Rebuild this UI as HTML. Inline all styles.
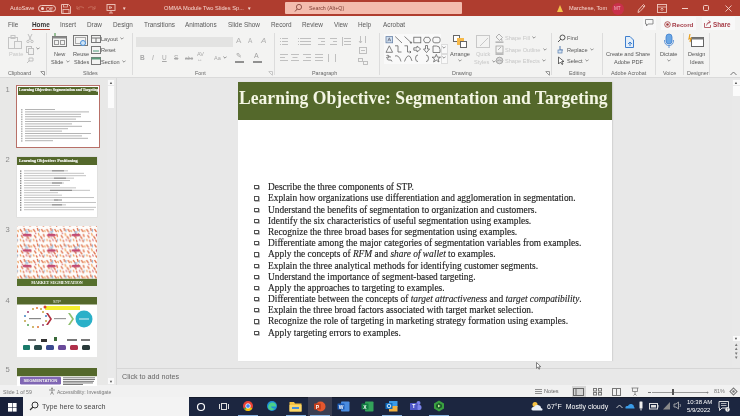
<!DOCTYPE html>
<html><head><meta charset="utf-8">
<style>
*{margin:0;padding:0;box-sizing:border-box}
html,body{width:740px;height:416px;overflow:hidden;background:#e8e8e8;font-family:"Liberation Sans",sans-serif;position:relative;color:#444}
.a{position:absolute;white-space:nowrap}
#title{left:0;top:0;width:740px;height:16px;background:#af3d2f}
#tabs{left:0;top:16px;width:740px;height:15px;background:#f3f3f2}
#ribbon{left:0;top:31px;width:740px;height:46px;background:#f3f3f2}
#rbline{left:0;top:77px;width:740px;height:1px;background:#dadada}
#thumbs{left:0;top:78px;width:117px;height:307px;background:#e8e8e7}
#main{left:117px;top:78px;width:623px;height:290px;background:#e8e8e8}
#slide{left:237.5px;top:82px;width:374px;height:279px;background:#fff;box-shadow:1px 0 1px #d4d4d4}
#stitle{left:237.5px;top:82px;width:374px;height:37.5px;background:#54682b}
#notes{left:117px;top:368px;width:623px;height:17px;background:#e8e8e8;border-top:1px solid #d6d6d6}
#status{left:0;top:385px;width:740px;height:12px;background:#f1f1f1}
#task{left:0;top:397px;width:740px;height:19px;background:#1c2640;border-top:1px solid #151b2b}
.tt{color:#f6d9d2;font-size:6px;top:4px}
.tab{top:20.5px;font-size:6.4px;color:#5a5a5a}
.rl{font-size:5.6px;color:#555}
.gl{font-size:5.4px;color:#666;top:70px}
.dd{display:inline-block;width:2px;height:2px;border-right:0.7px solid #888;border-bottom:0.7px solid #888;transform:rotate(45deg);margin-left:3px;vertical-align:2.5px}
.sep{width:1px;background:#dcdcdc;top:33px;height:42px}
.dis{color:#c6c6c6}
.blt{font-family:"Liberation Serif",serif;font-size:9.38px;color:#1a1a1a;left:268px;-webkit-text-stroke:0.15px #333}
.bx{left:254.3px;width:4.6px;height:4.3px;border:0.7px solid #555;box-shadow:0.7px 0.7px 0 #999}
</style></head><body><div style="position:absolute;left:0;top:0;width:740px;height:416px;will-change:transform">
<div id="title" class="a"></div>
<div id="tabs" class="a"></div>
<div id="ribbon" class="a"></div>
<div id="rbline" class="a"></div>
<div id="thumbs" class="a"></div>
<div id="main" class="a"></div>
<div id="slide" class="a"></div>
<div id="stitle" class="a"></div>
<div id="notes" class="a"></div>
<div id="status" class="a"></div>
<div id="task" class="a"></div>

<!-- TITLEBAR -->
<div class="a tt" style="left:10px;top:5px;font-size:5.6px">AutoSave</div>
<div class="a" style="left:38px;top:5px;width:18px;height:7px;border:0.9px solid #f3cfc6;border-radius:4px"></div>
<div class="a" style="left:40.5px;top:7px;width:3px;height:3px;background:#f6ddd6;border-radius:50%"></div>
<div class="a tt" style="left:46px;font-size:5px;top:5.5px">Off</div>
<svg class="a" style="left:60px;top:4px" width="11" height="10"><path d="M1.5 0.5 H8.5 L10.5 2.5 V9.5 H1.5 Z" fill="none" stroke="#f0c9bf" stroke-width="0.9"/><rect x="3" y="5.5" width="6" height="4" fill="none" stroke="#f0c9bf" stroke-width="0.8"/><rect x="3.5" y="0.5" width="4" height="2.5" fill="none" stroke="#f0c9bf" stroke-width="0.7"/></svg>
<svg class="a" style="left:75px;top:4px" width="24" height="10"><path d="M2 5 Q5 1 9 4 M2 5 L2 2 M2 5 L5 5" stroke="#c8705f" fill="none" stroke-width="0.9"/><path d="M20 5 Q17 1 13 4 M20 5 L20 2 M20 5 L17 5" stroke="#c8705f" fill="none" stroke-width="0.9"/></svg>
<svg class="a" style="left:106px;top:3px" width="10" height="11"><rect x="1" y="1.5" width="8" height="6" fill="none" stroke="#f0c9bf" stroke-width="0.9"/><path d="M5 7.5 V10 M3 10 H7 M3.5 3.5 L6 4.5 L3.5 5.5Z" stroke="#f0c9bf" fill="none" stroke-width="0.8"/></svg>
<div class="a tt" style="left:122px;font-size:4.5px;top:6px">&#9660;</div>
<div class="a tt" style="left:164px;font-size:5.7px;top:5px">OMMA Module Two Slides Sp...</div>
<div class="a tt" style="left:247px;font-size:4.5px;top:6px">&#9660;</div>
<div class="a" style="left:285px;top:2px;width:177px;height:12px;background:#f3bcae;border-radius:1px"></div>
<svg class="a" style="left:294px;top:3px" width="9" height="10"><circle cx="5" cy="4" r="2.6" fill="none" stroke="#8a4a40" stroke-width="0.9"/><path d="M3.2 6 L1 8.5" stroke="#8a4a40" stroke-width="1"/></svg>
<div class="a tt" style="left:309px;color:#7a3a30;font-size:5.3px;top:5px">Search (Alt+Q)</div>
<div class="a" style="left:557px;top:5px;width:0;height:0;border-left:3.5px solid transparent;border-right:3.5px solid transparent;border-bottom:7px solid #f2c24a"></div>
<div class="a tt" style="left:569px;font-size:5.6px;top:5.3px">Marchese, Tom</div>
<div class="a" style="left:611.5px;top:2.8px;width:12px;height:12px;border-radius:50%;background:#c9304a"></div>
<div class="a tt" style="left:614px;font-size:4.6px;top:6.3px;color:#f3b8c2">MT</div>
<svg class="a" style="left:636px;top:3px" width="10" height="11"><path d="M2 9.5 L2.5 7 L7.5 1.5 L9 3 L4 8.5 Z M6.5 2.5 L8 4" stroke="#f0c9bf" fill="none" stroke-width="0.9"/></svg>
<svg class="a" style="left:657px;top:4px" width="10" height="9"><rect x="0.5" y="0.5" width="9" height="8" fill="none" stroke="#f0c9bf" stroke-width="0.9"/><path d="M0.5 3 H9.5 M5 4.5 V7 M3.5 5.5 L5 4 L6.5 5.5" stroke="#f0c9bf" fill="none" stroke-width="0.8"/></svg>
<div class="a" style="left:682px;top:8px;width:6px;height:0.9px;background:#f3d0c8"></div>
<div class="a" style="left:703px;top:5px;width:6px;height:6px;border:0.9px solid #f3d0c8;border-radius:1.5px"></div>
<svg class="a" style="left:725px;top:5px" width="7" height="7"><path d="M0.5 0.5 L6.5 6.5 M6.5 0.5 L0.5 6.5" stroke="#f3d0c8" stroke-width="0.9"/></svg>

<!-- TABS -->
<div class="a tab" style="left:8px">File</div>
<div class="a tab" style="left:32px;font-weight:bold;color:#333">Home</div>
<div class="a" style="left:32px;top:28.5px;width:18px;height:1.5px;background:#b33d2e"></div>
<div class="a tab" style="left:60px">Insert</div>
<div class="a tab" style="left:87px">Draw</div>
<div class="a tab" style="left:113px">Design</div>
<div class="a tab" style="left:144px">Transitions</div>
<div class="a tab" style="left:185px">Animations</div>
<div class="a tab" style="left:228px">Slide Show</div>
<div class="a tab" style="left:271px">Record</div>
<div class="a tab" style="left:302px">Review</div>
<div class="a tab" style="left:334px">View</div>
<div class="a tab" style="left:358px">Help</div>
<div class="a tab" style="left:383px">Acrobat</div>
<div class="a" style="left:643px;top:17px;width:13px;height:13px;background:#f8f8f8"></div>
<svg class="a" style="left:645px;top:19px" width="9" height="8"><path d="M0.5 0.5 H8 V5 H3 L1.5 7 V5 H0.5 Z" fill="none" stroke="#777" stroke-width="0.8"/></svg>
<div class="a" style="left:661px;top:17px;width:35px;height:13px;background:#f8f8f8"></div>
<svg class="a" style="left:663.5px;top:20.5px" width="7" height="7"><circle cx="3.5" cy="3.5" r="2.8" fill="none" stroke="#a4373a" stroke-width="0.8"/><circle cx="3.5" cy="3.5" r="1.3" fill="#a4373a"/></svg>
<div class="a tab" style="left:672px;color:#a33a45;font-weight:bold;font-size:6.2px;-webkit-text-stroke:0">Record</div>
<div class="a" style="left:702px;top:17px;width:33px;height:13px;background:#f8f8f8"></div>
<svg class="a" style="left:704px;top:20px" width="7" height="8"><path d="M0.5 3 V7.5 H6.5 V5 M2.5 5.5 Q3 2 6 2 M4.5 0.5 L6.5 2 L4.5 3.5" stroke="#a83f4a" fill="none" stroke-width="0.8"/></svg>
<div class="a tab" style="left:713px;color:#a83f4a;font-weight:bold;font-size:6.3px">Share</div>

<!-- RIBBON -->
<!-- Clipboard -->
<svg class="a" style="left:7px;top:34px" width="16" height="16" viewBox="0 0 16 16"><rect x="1.5" y="3.5" width="9" height="11" fill="none" stroke="#c4c4c4"/><rect x="4" y="1.5" width="4" height="3" fill="none" stroke="#c4c4c4"/><rect x="7.5" y="7.5" width="7" height="7" fill="#f1f1f0" stroke="#c4c4c4"/></svg>
<div class="a rl dis" style="left:9px;top:51px">Paste</div>

<svg class="a" style="left:25px;top:33px" width="10" height="10"><path d="M3 1 L6 7 M7 1 L4 7" stroke="#c0c0c0" fill="none"/><circle cx="3" cy="8.5" r="1.2" fill="none" stroke="#c0c0c0"/><circle cx="7" cy="8.5" r="1.2" fill="none" stroke="#c0c0c0"/></svg>
<svg class="a" style="left:25px;top:45px" width="10" height="10"><rect x="1.5" y="1.5" width="5" height="6" fill="none" stroke="#c0c0c0"/><rect x="3.5" y="3.5" width="5" height="6" fill="#f1f1f0" stroke="#c0c0c0"/></svg>
<div class="a rl dis" style="left:36px;top:46px"><svg width="4" height="3" style="vertical-align:1px"><path d="M0.4 0.6 L2 2.2 L3.6 0.6" stroke="#777" stroke-width="0.8" fill="none"/></svg></div>
<svg class="a" style="left:25px;top:56px" width="10" height="9"><path d="M2 7 L5 4 M4 2 L8 2 L8 5 L4 5 Z" stroke="#c0c0c0" fill="none"/></svg>
<div class="a gl" style="left:8px">Clipboard</div>
<svg class="a" style="left:40px;top:71px" width="5" height="5"><path d="M0.5 0.5 H4.5 V4.5 M1 1 L4 4" stroke="#999" fill="none"/></svg>
<div class="a sep" style="left:46px"></div>
<!-- Slides -->
<svg class="a" style="left:51px;top:33px" width="17" height="15"><rect x="1.5" y="3.5" width="14" height="10" fill="none" stroke="#777"/><rect x="1.5" y="3.5" width="14" height="2" fill="#888"/><rect x="3.5" y="7.5" width="4" height="4" fill="none" stroke="#999"/><rect x="9.5" y="7.5" width="4" height="4" fill="none" stroke="#999"/><path d="M4 0 V3" stroke="#3b8b3b"/></svg>
<div class="a rl" style="left:54px;top:51px">New</div>
<div class="a rl" style="left:51px;top:59px">Slide<svg width="4" height="3" style="margin-left:2.5px;vertical-align:1px"><path d="M0.4 0.6 L2 2.2 L3.6 0.6" stroke="#777" stroke-width="0.8" fill="none"/></svg></div>
<svg class="a" style="left:72px;top:34px" width="17" height="15"><rect x="1.5" y="1.5" width="14" height="10" fill="none" stroke="#777"/><rect x="3.5" y="3.5" width="10" height="6" fill="none" stroke="#aaa"/><circle cx="11" cy="9" r="2.5" fill="#cfe4f5" stroke="#4a90d9"/></svg>
<div class="a rl" style="left:73px;top:51px">Reuse</div>
<div class="a rl" style="left:74px;top:59px">Slides</div>
<svg class="a" style="left:91px;top:35px" width="10" height="8"><rect x="0.5" y="0.5" width="9" height="7" fill="none" stroke="#777"/><path d="M0.5 3 H9.5 M5 3 V7.5" stroke="#777"/></svg>
<div class="a rl" style="left:101px;top:36px">Layout<svg width="4" height="3" style="margin-left:2.5px;vertical-align:1px"><path d="M0.4 0.6 L2 2.2 L3.6 0.6" stroke="#777" stroke-width="0.8" fill="none"/></svg></div>
<svg class="a" style="left:91px;top:46px" width="10" height="8"><rect x="0.5" y="0.5" width="9" height="7" fill="none" stroke="#777"/><path d="M2 5 H8" stroke="#4a9a7a"/></svg>
<div class="a rl" style="left:101px;top:47px">Reset</div>
<svg class="a" style="left:91px;top:57px" width="10" height="8"><rect x="0.5" y="0.5" width="9" height="7" fill="none" stroke="#777"/><rect x="0.5" y="0.5" width="9" height="2" fill="#5a9a7a"/></svg>
<div class="a rl" style="left:101px;top:58.5px">Section<svg width="4" height="3" style="margin-left:2.5px;vertical-align:1px"><path d="M0.4 0.6 L2 2.2 L3.6 0.6" stroke="#777" stroke-width="0.8" fill="none"/></svg></div>
<div class="a gl" style="left:83px">Slides</div>
<div class="a sep" style="left:132px"></div>
<!-- Font -->
<div class="a" style="left:136px;top:37px;width:97px;height:10px;background:#e3e3e2"></div>
<div class="a" style="left:236px;top:36px;font-size:8px;color:#b0b0b0">A</div>
<div class="a" style="left:248px;top:37px;font-size:6.5px;color:#b0b0b0">A</div>
<div class="a" style="left:261px;top:36px;font-size:8px;color:#b0b0b0;font-style:italic">A</div>
<div class="a" style="left:140px;top:54px;font-size:6.5px;color:#a8a8a8;font-weight:bold">B</div>
<div class="a" style="left:152px;top:54px;font-size:6.5px;color:#a8a8a8;font-style:italic">I</div>
<div class="a" style="left:162px;top:54px;font-size:6.5px;color:#a8a8a8;text-decoration:underline">U</div>
<div class="a" style="left:174px;top:54px;font-size:6.5px;color:#a8a8a8;text-decoration:line-through">S</div>
<div class="a" style="left:185px;top:55px;font-size:5px;color:#a8a8a8;text-decoration:line-through">abc</div>
<div class="a" style="left:197px;top:52px;font-size:5.5px;color:#a8a8a8;line-height:5px">AV<br>&#8596;</div>
<div class="a" style="left:214px;top:55px;font-size:5.5px;color:#a8a8a8">Aa<svg width="4" height="3" style="margin-left:2.5px;vertical-align:1px"><path d="M0.4 0.6 L2 2.2 L3.6 0.6" stroke="#777" stroke-width="0.8" fill="none"/></svg></div>
<div class="a" style="left:236px;top:52px;font-size:7px;color:#a0a0a0">&#9998;</div>
<div class="a" style="left:235px;top:61px;width:9px;height:2px;background:#909090"></div>
<div class="a" style="left:254px;top:52px;font-size:7px;color:#a0a0a0">A</div>
<div class="a" style="left:253px;top:61px;width:9px;height:2px;background:#909090"></div>
<div class="a gl" style="left:195px">Font</div>
<svg class="a" style="left:268px;top:71px" width="5" height="5"><path d="M0.5 0.5 H4.5 V4.5 M1 1 L4 4" stroke="#c8c8c8" fill="none"/></svg>
<div class="a sep" style="left:274px"></div>
<!-- Paragraph -->
<svg class="a" style="left:278px;top:36px" width="76" height="28" stroke="#bababa" fill="none" stroke-width="0.9">
<path d="M2 2.5H3 M4 2.5H10 M2 5.5H3 M4 5.5H10 M2 8.5H3 M4 8.5H10"/>
<path d="M20 2.5H21 M22 2.5H33 M20 5.5H21 M22 5.5H33 M20 8.5H21 M22 8.5H33"/>
<path d="M40 2.5H47 M43 5.5H47 M40 8.5H47 M52 2.5H59 M55 5.5H59 M52 8.5H59"/>
<path d="M66 2.5H73 M66 5.5H73 M66 8.5H73 M64.5 1V10"/>
<path d="M2 18.5H10 M2 21.5H7 M2 24.5H10"/>
<path d="M13 18.5H21 M14.5 21.5H19.5 M13 24.5H21"/>
<path d="M25 18.5H33 M28 21.5H33 M25 24.5H33"/>
<path d="M37 18.5H45 M37 21.5H45 M37 24.5H45"/>
<path d="M50.5 18V26 M57.5 18V26"/>
</svg>
<svg class="a" style="left:357px;top:35px" width="12" height="32" stroke="#bababa" fill="none" stroke-width="0.9">
<path d="M3.5 1V8 M8.5 1V8 M2 6 L3.5 8 L5 6"/>
<rect x="2.5" y="12.5" width="7" height="6"/><path d="M4 15.5 H8"/>
<rect x="1.5" y="23.5" width="4" height="3"/><rect x="6.5" y="26.5" width="4" height="3"/>
</svg>
<div class="a gl" style="left:312px">Paragraph</div>
<div class="a sep" style="left:379px"></div>
<!-- Drawing -->
<div class="a" style="left:384px;top:34px;width:57px;height:30px;background:#f9f9f9"></div>
<svg class="a" style="left:384px;top:34px" width="58" height="30" stroke="#666" fill="none" stroke-width="0.8">
<rect x="2" y="2.6" width="6.6" height="6.2" fill="#cfdff0" stroke="#6a84a8"/><path d="M3.8 7.3 L5.3 3.8 L6.8 7.3 M4.3 6 H6.3" stroke="#556" stroke-width="0.6"/>
<path d="M11.2 2.5 L18 9"/>
<path d="M20.5 2.5 L27 8.5"/><circle cx="27" cy="8.6" r="0.7" fill="#666"/>
<rect x="29.8" y="3.2" width="7" height="5.6"/>
<path d="M39.5 6 L41 3.3 H45 L46.6 6 L45 8.7 H41 Z"/>
<rect x="48.8" y="3.2" width="7.3" height="5.6" rx="2"/>
<path d="M2 18.3 L5.3 11.8 L8.6 18.3 Z"/>
<path d="M11 11.8 H14 V18 H17.5"/>
<path d="M20.5 11.8 H23.5 V18 H27 M25.8 16.8 L27 18 L25.8 19.2"/>
<path d="M29.8 13.8 H33 V12 L36.6 15 L33 18 V16.2 H29.8 Z"/>
<path d="M41.5 11.5 V15 H39.5 L42.5 18.6 L45.5 15 H43.5 V11.5 Z"/>
<path d="M49 12 H52.5 Q56 12 56 15.5 V18.5 H49 Z"/>
<path d="M2.5 21.5 Q6 20.5 4.5 23.5 Q2 26 5 26 Q8 25.5 8 27.5 M2 24 Q4 22 7 23"/>
<path d="M11 22 Q15 20.5 17 27.5"/>
<path d="M20.5 27.5 Q23 20 26 22.5 Q27 24 28 27"/>
<path d="M34 21 Q31.5 21 31.5 24.3 Q31.5 27.6 34 27.6"/>
<path d="M42 21 Q44.5 21 44.5 24.3 Q44.5 27.6 42 27.6"/>
<path d="M52.3 20.3 L53.5 23.2 L56.5 23.2 L54.1 25 L55 28 L52.3 26.2 L49.6 28 L50.5 25 L48.1 23.2 L51.1 23.2 Z"/>
</svg>
<div class="a" style="left:440.5px;top:43.5px;width:7px;height:10px;background:#f9f9f9;border:0.8px solid #ddd"></div>
<div class="a" style="left:440.5px;top:54px;width:7px;height:9.5px;background:#f9f9f9;border:0.8px solid #ddd"></div>
<div class="a" style="left:442px;top:45px;font-size:5px;color:#555"><svg width="4" height="3" style="vertical-align:1px"><path d="M0.4 0.6 L2 2.2 L3.6 0.6" stroke="#777" stroke-width="0.8" fill="none"/></svg></div>
<div class="a" style="left:442px;top:55px;font-size:5px;color:#555"><svg width="4" height="3" style="vertical-align:1px"><path d="M0.4 0.6 L2 2.2 L3.6 0.6" stroke="#777" stroke-width="0.8" fill="none"/></svg></div>
<svg class="a" style="left:452px;top:34px" width="16" height="15"><rect x="1.5" y="1.5" width="6" height="6" fill="#fff" stroke="#666"/><rect x="5" y="4" width="7" height="7" fill="#f6b94a"/><rect x="8.5" y="7.5" width="6" height="6" fill="#fff" stroke="#666"/></svg>
<div class="a rl" style="left:450px;top:51px">Arrange</div>
<div class="a rl" style="left:458px;top:58px"><svg width="4" height="3" style="vertical-align:1px"><path d="M0.4 0.6 L2 2.2 L3.6 0.6" stroke="#777" stroke-width="0.8" fill="none"/></svg></div>
<svg class="a" style="left:475px;top:34px" width="16" height="15"><rect x="1.5" y="1.5" width="13" height="12" fill="none" stroke="#c8c8c8"/><path d="M5 12 L13 4" stroke="#c8c8c8"/></svg>
<div class="a rl dis" style="left:476px;top:51px">Quick</div>
<div class="a rl dis" style="left:474px;top:59px">Styles<svg width="4" height="3" style="margin-left:2.5px;vertical-align:1px"><path d="M0.4 0.6 L2 2.2 L3.6 0.6" stroke="#777" stroke-width="0.8" fill="none"/></svg></div>
<svg class="a" style="left:495px;top:33px" width="9" height="10"><path d="M4 1 L7.5 4.5 L4.5 7.5 L1 4 Z M6.5 6 Q7.5 7.5 6.5 8" stroke="#a0a0a0" fill="none" stroke-width="0.8"/><rect x="0.5" y="8.5" width="8" height="1.3" fill="#a8a8a8"/></svg>
<div class="a rl dis" style="left:505px;top:35px">Shape Fill<svg width="4" height="3" style="margin-left:2.5px;vertical-align:1px"><path d="M0.4 0.6 L2 2.2 L3.6 0.6" stroke="#777" stroke-width="0.8" fill="none"/></svg></div>
<svg class="a" style="left:495px;top:44.5px" width="9" height="10"><rect x="1" y="1" width="7" height="7" fill="none" stroke="#a0a0a0" stroke-width="0.8"/><path d="M3 5 L6 2" stroke="#a0a0a0" stroke-width="0.8"/><rect x="0.5" y="8.5" width="8" height="1.3" fill="#a8a8a8"/></svg>
<div class="a rl dis" style="left:505px;top:47px">Shape Outline<svg width="4" height="3" style="margin-left:2.5px;vertical-align:1px"><path d="M0.4 0.6 L2 2.2 L3.6 0.6" stroke="#777" stroke-width="0.8" fill="none"/></svg></div>
<svg class="a" style="left:495px;top:56px" width="9" height="9"><circle cx="4.5" cy="4.5" r="3.3" fill="#d8d8d8" stroke="#999" stroke-width="0.8"/><path d="M2 5 Q4.5 3 7 5" stroke="#999" fill="none" stroke-width="0.7"/></svg>
<div class="a rl dis" style="left:505px;top:58px">Shape Effects<svg width="4" height="3" style="margin-left:2.5px;vertical-align:1px"><path d="M0.4 0.6 L2 2.2 L3.6 0.6" stroke="#777" stroke-width="0.8" fill="none"/></svg></div>
<div class="a gl" style="left:452px">Drawing</div>
<svg class="a" style="left:545px;top:71px" width="5" height="5"><path d="M0.5 0.5 H4.5 V4.5 M1 1 L4 4" stroke="#999" fill="none"/></svg>
<div class="a sep" style="left:551px"></div>
<!-- Editing -->
<svg class="a" style="left:557px;top:34px" width="9" height="9"><circle cx="5.5" cy="3.5" r="2.5" fill="none" stroke="#555"/><path d="M4 5 L1 8" stroke="#555"/></svg>
<div class="a rl" style="left:567px;top:35px">Find</div>
<svg class="a" style="left:557px;top:45px" width="9" height="9"><path d="M3 1 V5 H6" stroke="#5a7fb0" fill="none"/><rect x="1" y="5" width="4" height="3" fill="#d6e5f5" stroke="#5a7fb0" stroke-width="0.7"/></svg>
<div class="a rl" style="left:567px;top:47px">Replace<svg width="4" height="3" style="margin-left:2.5px;vertical-align:1px"><path d="M0.4 0.6 L2 2.2 L3.6 0.6" stroke="#777" stroke-width="0.8" fill="none"/></svg></div>
<svg class="a" style="left:557px;top:56px" width="9" height="9"><path d="M1.5 1 L1.5 8 L3.5 6 L5 8.5 L6 8 L4.7 5.5 L7 5.5 Z" fill="#fff" stroke="#444" stroke-width="0.8"/></svg>
<div class="a rl" style="left:567px;top:58px">Select<svg width="4" height="3" style="margin-left:2.5px;vertical-align:1px"><path d="M0.4 0.6 L2 2.2 L3.6 0.6" stroke="#777" stroke-width="0.8" fill="none"/></svg></div>
<div class="a gl" style="left:569px">Editing</div>
<div class="a sep" style="left:602px"></div>
<!-- Acrobat -->
<svg class="a" style="left:624px;top:36px" width="11" height="12"><path d="M1.5 0.5 H6 L9.5 4 V11.5 H1.5 Z" fill="#e3eef9" stroke="#3f7fce"/><path d="M4 8 L6 6 L8 8 M6 6 V10" stroke="#3f7fce" fill="none"/></svg>
<div class="a rl" style="left:606px;top:51px">Create and Share</div>
<div class="a rl" style="left:614px;top:59px">Adobe PDF</div>
<div class="a gl" style="left:611px">Adobe Acrobat</div>
<div class="a sep" style="left:655px"></div>
<!-- Voice -->
<svg class="a" style="left:663px;top:33px" width="12" height="16"><rect x="3" y="1" width="6" height="10" rx="3" fill="#6aa6e4" stroke="#3f7fce" stroke-width="0.8"/><path d="M1.5 7 Q1.5 12.5 6 12.5 Q10.5 12.5 10.5 7 M6 12.5 V15" stroke="#3f7fce" fill="none" stroke-width="0.8"/></svg>
<div class="a rl" style="left:660px;top:51px">Dictate</div>
<div class="a rl" style="left:667px;top:58px"><svg width="4" height="3" style="vertical-align:1px"><path d="M0.4 0.6 L2 2.2 L3.6 0.6" stroke="#777" stroke-width="0.8" fill="none"/></svg></div>
<div class="a gl" style="left:663px">Voice</div>
<div class="a sep" style="left:683px"></div>
<!-- Designer -->
<svg class="a" style="left:688px;top:33px" width="17" height="15"><rect x="3.5" y="4.5" width="12" height="9" fill="#fff" stroke="#666"/><rect x="3.5" y="4.5" width="12" height="2" fill="#777"/><path d="M2 1 L1 6 L3 5 L2 9" stroke="#e8a020" fill="none" stroke-width="1.2"/></svg>
<div class="a rl" style="left:688px;top:51px">Design</div>
<div class="a rl" style="left:690px;top:59px">Ideas</div>
<div class="a gl" style="left:687px">Designer</div>
<div class="a sep" style="left:709px"></div>
<svg class="a" style="left:730px;top:71px" width="7" height="5"><path d="M0.5 4 L3.5 1 L6.5 4" stroke="#666" fill="none" stroke-width="0.9"/></svg>

<!-- SLIDE -->
<div class="a" style="left:239px;top:87.5px;font-family:'Liberation Serif',serif;font-weight:bold;font-size:17.6px;color:#f4f6e4;transform:scaleY(1.07);transform-origin:0 100%">Learning Objective: Segmentation and Targeting</div>
<div class="a bx" style="top:185.2px"></div><div class="a blt" style="top:182.2px">Describe the three components of STP.</div>
<div class="a bx" style="top:196.4px"></div><div class="a blt" style="top:193.4px">Explain how organizations use differentiation and agglomeration in segmentation.</div>
<div class="a bx" style="top:207.6px"></div><div class="a blt" style="top:204.6px">Understand the benefits of segmentation to organization and customers.</div>
<div class="a bx" style="top:218.7px"></div><div class="a blt" style="top:215.7px">Identify the six characteristics of useful segmentation using examples.</div>
<div class="a bx" style="top:229.9px"></div><div class="a blt" style="top:226.9px">Recognize the three broad bases for segmentation using examples.</div>
<div class="a bx" style="top:241.1px"></div><div class="a blt" style="top:238.1px">Differentiate among the major categories of segmentation variables from examples.</div>
<div class="a bx" style="top:252.3px"></div><div class="a blt" style="top:249.3px">Apply the concepts of <i>RFM</i> and <i>share of wallet</i> to examples.</div>
<div class="a bx" style="top:263.5px"></div><div class="a blt" style="top:260.5px">Explain the three analytical methods for identifying customer segments.</div>
<div class="a bx" style="top:274.6px"></div><div class="a blt" style="top:271.6px">Understand the importance of segment-based targeting.</div>
<div class="a bx" style="top:285.8px"></div><div class="a blt" style="top:282.8px">Apply the approaches to targeting to examples.</div>
<div class="a bx" style="top:297.0px"></div><div class="a blt" style="top:294.0px">Differentiate between the concepts of <i>target attractiveness</i> and <i>target compatibility</i>.</div>
<div class="a bx" style="top:308.2px"></div><div class="a blt" style="top:305.2px">Explain the three broad factors associated with target market selection.</div>
<div class="a bx" style="top:319.4px"></div><div class="a blt" style="top:316.4px">Recognize the role of targeting in marketing strategy formation using examples.</div>
<div class="a bx" style="top:330.5px"></div><div class="a blt" style="top:327.5px">Apply targeting errors to examples.</div>

<!-- THUMBS -->
<div class="a" style="left:5.5px;top:85.0px;font-size:7.6px;color:#8a8a8a">1</div>
<div class="a" style="left:15.5px;top:85px;width:84px;height:62.8px;border:1.6px solid #b87068;background:#fff"></div>
<div class="a" style="left:17.5px;top:87px;width:80px;height:8px;background:#54682b"></div>
<div class="a" style="left:19px;top:88.3px;font-family:'Liberation Serif',serif;font-weight:bold;font-size:3.8px;color:#fff;-webkit-text-stroke:0.1px #fff">Learning Objective: Segmentation and Targeting</div>
<svg class="a" style="left:21px;top:108.3px" width="72" height="36">
<g fill="#b4b4b4">
<rect x="0" y="1" width="1.5" height="1.5"/><rect x="4" y="1" width="30" height="1"/>
<rect x="0" y="3.4" width="1.5" height="1.5"/><rect x="4" y="3.4" width="64" height="1"/>
<rect x="0" y="5.8" width="1.5" height="1.5"/><rect x="4" y="5.8" width="56" height="1"/>
<rect x="0" y="8.2" width="1.5" height="1.5"/><rect x="4" y="8.2" width="56" height="1"/>
<rect x="0" y="10.6" width="1.5" height="1.5"/><rect x="4" y="10.6" width="51" height="1"/>
<rect x="0" y="13" width="1.5" height="1.5"/><rect x="4" y="13" width="66" height="1"/>
<rect x="0" y="15.4" width="1.5" height="1.5"/><rect x="4" y="15.4" width="47" height="1"/>
<rect x="0" y="17.8" width="1.5" height="1.5"/><rect x="4" y="17.8" width="57" height="1"/>
<rect x="0" y="20.2" width="1.5" height="1.5"/><rect x="4" y="20.2" width="43" height="1"/>
<rect x="0" y="22.6" width="1.5" height="1.5"/><rect x="4" y="22.6" width="37" height="1"/>
<rect x="0" y="25" width="1.5" height="1.5"/><rect x="4" y="25" width="66" height="1"/>
<rect x="0" y="27.4" width="1.5" height="1.5"/><rect x="4" y="27.4" width="57" height="1"/>
<rect x="0" y="29.8" width="1.5" height="1.5"/><rect x="4" y="29.8" width="63" height="1"/>
<rect x="0" y="32.2" width="1.5" height="1.5"/><rect x="4" y="32.2" width="28" height="1"/>
</g></svg>

<div class="a" style="left:5.5px;top:155.0px;font-size:7.6px;color:#8a8a8a">2</div>
<div class="a" style="left:17px;top:157px;width:80px;height:59.5px;background:#fff;box-shadow:0 0 0 0.5px #d8d8d8"></div>
<div class="a" style="left:17px;top:157px;width:80px;height:8px;background:#54682b"></div>
<div class="a" style="left:19px;top:157.8px;font-family:'Liberation Serif',serif;font-weight:bold;font-size:4.3px;color:#fff;-webkit-text-stroke:0.1px #fff">Learning Objective: Positioning</div>
<svg class="a" style="left:20px;top:169.5px" width="76" height="44">
<g fill="#bcbcbc">
<rect x="0" y="0.40" width="1.4" height="1.4" fill="#888"/><rect x="4" y="0.40" width="44" height="0.9"/><rect x="32" y="0.40" width="12" height="0.9" fill="#777"/>
<rect x="0" y="2.83" width="1.4" height="1.4" fill="#888"/><rect x="4" y="2.83" width="60" height="0.9"/>
<rect x="0" y="5.26" width="1.4" height="1.4" fill="#888"/><rect x="4" y="5.26" width="62" height="0.9"/>
<rect x="0" y="7.69" width="1.4" height="1.4" fill="#888"/><rect x="4" y="7.69" width="50" height="0.9"/><rect x="34" y="7.69" width="12" height="0.9" fill="#777"/>
<rect x="0" y="10.12" width="1.4" height="1.4" fill="#888"/><rect x="4" y="10.12" width="46" height="0.9"/>
<rect x="0" y="12.55" width="1.4" height="1.4" fill="#888"/><rect x="4" y="12.55" width="40" height="0.9"/><rect x="32" y="12.55" width="10" height="0.9" fill="#777"/>
<rect x="0" y="14.98" width="1.4" height="1.4" fill="#888"/><rect x="4" y="14.98" width="36" height="0.9"/>
<rect x="0" y="17.41" width="1.4" height="1.4" fill="#888"/><rect x="4" y="17.41" width="52" height="0.9"/>
<rect x="0" y="19.84" width="1.4" height="1.4" fill="#888"/><rect x="4" y="19.84" width="66" height="0.9"/><rect x="30" y="19.84" width="22" height="0.9" fill="#777"/>
<rect x="0" y="22.27" width="1.4" height="1.4" fill="#888"/><rect x="4" y="22.27" width="34" height="0.9"/>
<rect x="0" y="24.70" width="1.4" height="1.4" fill="#888"/><rect x="4" y="24.70" width="38" height="0.9"/>
<rect x="0" y="27.13" width="1.4" height="1.4" fill="#888"/><rect x="4" y="27.13" width="70" height="0.9"/>
<rect x="0" y="29.56" width="1.4" height="1.4" fill="#888"/><rect x="4" y="29.56" width="34" height="0.9"/><rect x="34" y="29.56" width="8" height="0.9" fill="#777"/>
<rect x="0" y="31.99" width="1.4" height="1.4" fill="#888"/><rect x="4" y="31.99" width="72" height="0.9"/>
<rect x="0" y="34.42" width="1.4" height="1.4" fill="#888"/><rect x="4" y="34.42" width="42" height="0.9"/><rect x="32" y="34.42" width="10" height="0.9" fill="#777"/>
<rect x="0" y="36.85" width="1.4" height="1.4" fill="#888"/><rect x="4" y="36.85" width="72" height="0.9"/>
<rect x="0" y="39.28" width="1.4" height="1.4" fill="#888"/><rect x="4" y="39.28" width="70" height="0.9"/>
</g></svg>

<div class="a" style="left:5.5px;top:225.0px;font-size:7.6px;color:#8a8a8a">3</div>
<svg class="a" style="left:17px;top:226px" width="80" height="60">
<defs><pattern id="pt" width="13.3" height="15.5" patternUnits="userSpaceOnUse" x="2" y="1">
<rect width="13.3" height="15.5" fill="#fefcfa"/>
<path d="M1 2 L3 5 M5 1 L6 4 M9 2 L11 5 M2 8 L4 11 M8 9 L10 12 M11 7 L12 10 M4 13 L5 15 M10 13 L11.5 15" stroke="#e0704a" stroke-width="1.3"/>
<path d="M6 6 L7 9 M1 12 L2 14 M12 3 L13 5" stroke="#f0a05a" stroke-width="1.2"/>
<path d="M3 5.5 L4 7 M7 12 L8 14" stroke="#d05a6a" stroke-width="1"/>
<path d="M7 2 L7 5 M12 12 L12 14" stroke="#7aa0c8" stroke-width="0.8"/>
</pattern>
<pattern id="pd" width="24.5" height="15.5" patternUnits="userSpaceOnUse" x="3" y="5">
<ellipse cx="7" cy="4" rx="4.5" ry="1.4" fill="#c24a72"/>
<path d="M6 -3 V2.5 M8 -2 L7.5 2.5" stroke="#8fb0d8" stroke-width="0.9"/><path d="M7 5 V8" stroke="#d08080" stroke-width="0.8"/>
</pattern></defs>
<rect width="80" height="60" fill="url(#pt)"/>
<rect width="80" height="52" fill="url(#pd)"/>
<rect y="52.8" width="80" height="7.7" fill="#56702e"/>
<text x="40" y="58.2" font-family="Liberation Serif" font-weight="bold" font-size="4" fill="#fff" text-anchor="middle">MARKET SEGMENTATION</text>
</svg>

<div class="a" style="left:5.5px;top:296.0px;font-size:7.6px;color:#8a8a8a">4</div>
<svg class="a" style="left:17px;top:297px" width="80" height="60">
<rect width="80" height="60" fill="#fff"/>
<rect width="80" height="7.5" fill="#54682b"/>
<text x="40" y="5.5" font-family="Liberation Sans" font-size="4" fill="#eee" text-anchor="middle">STP</text>
<rect x="28" y="9" width="35" height="4" fill="#f5f030"/>
<circle cx="28" cy="10" r="1.5" fill="#e0452a"/>
<g fill="#c0a040"><circle cx="16" cy="12" r="1"/><circle cx="20" cy="11" r="1" fill="#e07030"/><circle cx="24" cy="12" r="1"/><circle cx="11" cy="15" r="1" fill="#a04070"/><circle cx="8" cy="19" r="1" fill="#4080c0"/><circle cx="8" cy="24" r="1"/><circle cx="11" cy="28" r="1" fill="#50a050"/><circle cx="16" cy="30" r="1"/><circle cx="21" cy="30" r="1" fill="#e07030"/><circle cx="26" cy="28" r="1" fill="#a04070"/><circle cx="29" cy="24" r="1"/><circle cx="29" cy="19" r="1" fill="#4080c0"/><circle cx="26" cy="15" r="1"/></g>
<rect x="12" y="21" width="12" height="1.2" fill="#888"/>
<path d="M29 16 L33 22 L29 28 L31 28 L35 22 L31 16 Z" fill="#b03040"/>
<rect x="37" y="21" width="12" height="1.2" fill="#999"/>
<path d="M51 16 L55 22 L51 28 L53 28 L57 22 L53 16 Z" fill="#90c070"/>
<circle cx="67" cy="22" r="8.5" fill="#2ab0c8"/>
<rect x="62" y="21.5" width="10" height="1" fill="#e0f0f4"/>
<g fill="#777" transform="translate(0,2)"><rect x="11" y="40" width="8" height="2"/><rect x="24" y="40" width="6" height="3" fill="#333"/><rect x="37" y="38" width="3" height="4" fill="#3a6a3a"/><rect x="50" y="40" width="10" height="2"/><rect x="64" y="40" width="9" height="2"/></g>
<g transform="translate(0,2)"><rect x="6" y="46" width="7" height="5" rx="1" fill="#1a7a6a"/><rect x="17" y="46" width="8" height="5" rx="1.5" fill="#2a4a4a"/><rect x="29" y="46" width="8" height="5" rx="1.5" fill="#3a4a90"/><rect x="41" y="46" width="8" height="5" rx="1.5" fill="#6a4a9a"/><rect x="53" y="46" width="8" height="5" rx="1.5" fill="#b0304a"/><rect x="65" y="46" width="8" height="5" rx="1.5" fill="#2a3a3a"/></g>
</svg>

<div class="a" style="left:5.5px;top:364.8px;font-size:7.6px;color:#8a8a8a">5</div>
<svg class="a" style="left:17px;top:367.5px" width="80" height="18">
<rect width="80" height="18" fill="#fff"/>
<rect width="80" height="8.2" fill="#54682b"/>
<rect x="3" y="8.7" width="41" height="7.8" rx="1.2" fill="#8066b4"/>
<text x="23.5" y="14.2" font-family="Liberation Sans" font-weight="bold" font-size="4.3" fill="#eee" text-anchor="middle">SEGMENTATION</text>
<g fill="#444"><rect x="46" y="9.5" width="32" height="0.7"/><rect x="46" y="11.2" width="32" height="0.7"/><rect x="46" y="12.9" width="31" height="0.7"/><rect x="46" y="14.6" width="30" height="0.7"/><rect x="46" y="16.3" width="20" height="0.7"/></g>
</svg>
<!-- thumb scrollbar -->
<div class="a" style="left:107px;top:79px;width:8px;height:306px;background:#e9e9e9"></div>
<div class="a" style="left:108px;top:80px;width:6px;height:5px;background:#fafafa"></div>
<div class="a" style="left:109px;top:80px;font-size:4px;color:#555">&#9650;</div>
<div class="a" style="left:108px;top:86px;width:6px;height:22px;background:#fbfbfb"></div>
<div class="a" style="left:108px;top:378px;width:6px;height:6px;background:#fafafa"></div>
<div class="a" style="left:109px;top:379px;font-size:4px;color:#555">&#9660;</div>
<div class="a" style="left:116px;top:78px;width:1px;height:307px;background:#d8d8d8"></div>

<!-- main scrollbar -->
<div class="a" style="left:732px;top:79px;width:8px;height:288px;background:#e9e9e9"></div>
<div class="a" style="left:733px;top:80px;width:7px;height:5px;background:#fafafa"></div>
<div class="a" style="left:734px;top:80px;font-size:4px;color:#555">&#9650;</div>
<div class="a" style="left:733px;top:86px;width:7px;height:10px;background:#fbfbfb"></div>
<div class="a" style="left:733px;top:336px;width:7px;height:5px;background:#fafafa"></div>
<div class="a" style="left:734px;top:336px;font-size:4px;color:#555">&#9660;</div>
<div class="a" style="left:734px;top:343px;font-size:4.5px;color:#777;line-height:4px">&#9650;<br>&#9650;</div>
<div class="a" style="left:734px;top:352px;font-size:4.5px;color:#777;line-height:4px">&#9660;<br>&#9660;</div>

<!-- NOTES -->
<div class="a" style="left:122px;top:372px;font-size:7.2px;color:#666">Click to add notes</div>

<!-- STATUS -->
<div class="a" style="left:3px;top:388.5px;font-size:5.2px;color:#777">Slide 1 of 59</div>
<svg class="a" style="left:48px;top:387px" width="8" height="8"><circle cx="4" cy="1.5" r="1" fill="#888"/><path d="M1 3 H7 M4 3 V5.5 M2.5 7.5 L4 5 L5.5 7.5" stroke="#888" stroke-width="0.9" fill="none"/></svg>
<div class="a" style="left:57px;top:388.5px;font-size:5px;color:#777">Accessibility: Investigate</div>
<svg class="a" style="left:534px;top:388px" width="9" height="7"><path d="M1 1.5H8 M1 3.5H8 M1 5.5H8" stroke="#777" stroke-width="0.8"/></svg>
<div class="a" style="left:544px;top:388px;font-size:5.6px;color:#666">Notes</div>
<div class="a" style="left:572px;top:386px;width:14px;height:11px;background:#d4d4d4"></div>
<svg class="a" style="left:573px;top:388px" width="11" height="8"><rect x="0.5" y="0.5" width="10" height="7" fill="none" stroke="#666"/><path d="M3 0.5 V7.5" stroke="#666"/></svg>
<svg class="a" style="left:593px;top:388px" width="9" height="8"><rect x="0.5" y="0.5" width="3" height="2.5" fill="none" stroke="#777"/><rect x="5.5" y="0.5" width="3" height="2.5" fill="none" stroke="#777"/><rect x="0.5" y="4.5" width="3" height="2.5" fill="none" stroke="#777"/><rect x="5.5" y="4.5" width="3" height="2.5" fill="none" stroke="#777"/></svg>
<svg class="a" style="left:612px;top:388px" width="9" height="8"><rect x="0.5" y="0.5" width="8" height="7" fill="none" stroke="#777"/><path d="M4.5 0.5 V7.5" stroke="#777"/></svg>
<svg class="a" style="left:631px;top:387px" width="8" height="9"><path d="M0.5 1 H7.5 M1.5 1 V4.5 H6.5 V1 M4 4.5 V7 M2.5 8.5 L4 7 L5.5 8.5" stroke="#777" stroke-width="0.8" fill="none"/></svg>
<div class="a" style="left:648px;top:391.5px;width:3px;height:0.8px;background:#777"></div>
<div class="a" style="left:652px;top:391.5px;width:56px;height:0.8px;background:#999"></div>
<div class="a" style="left:672px;top:388.5px;width:2px;height:6px;background:#555"></div>
<div class="a" style="left:706px;top:389px;font-size:5px;color:#777">+</div>
<div class="a" style="left:714px;top:388px;font-size:5.4px;color:#777">81%</div>
<svg class="a" style="left:729px;top:387px" width="9" height="9"><rect x="2" y="2" width="5" height="5" fill="none" stroke="#777" transform="rotate(45 4.5 4.5)"/><circle cx="4.5" cy="4.5" r="1.2" fill="#777"/></svg>

<!-- TASKBAR -->
<div class="a" style="left:0;top:397px;width:23px;height:19px;background:#18203a"></div>
<svg class="a" style="left:8px;top:402.5px" width="9" height="9"><rect x="0" y="0" width="4" height="4" fill="#fff"/><rect x="4.6" y="0" width="4" height="4" fill="#fff"/><rect x="0" y="4.6" width="4" height="4" fill="#fff"/><rect x="4.6" y="4.6" width="4" height="4" fill="#fff"/></svg>
<div class="a" style="left:23px;top:397px;width:166px;height:19px;background:#f3f3f3"></div>
<svg class="a" style="left:29px;top:401px" width="10" height="10"><circle cx="6" cy="4" r="3" fill="none" stroke="#333" stroke-width="1"/><path d="M4 6 L1 9" stroke="#333" stroke-width="1.1"/></svg>
<div class="a" style="left:42px;top:401.5px;font-size:7.2px;color:#4a4a4a">Type here to search</div>
<svg class="a" style="left:196px;top:402px" width="10" height="10"><circle cx="5" cy="5" r="3.5" fill="none" stroke="#fff" stroke-width="1.2"/></svg>
<svg class="a" style="left:219px;top:401px" width="11" height="11"><rect x="2.5" y="2.5" width="5" height="6" fill="none" stroke="#ddd"/><path d="M0.5 3 V8 M9.5 3 V8" stroke="#ddd"/></svg>
<svg class="a" style="left:242px;top:400px" width="12" height="12"><circle cx="6" cy="6" r="5" fill="#e94235"/><path d="M6 6 L10.3 8.5 A5 5 0 0 1 1.7 8.5 Z" fill="#34a853"/><path d="M6 6 L1.7 8.5 A5 5 0 0 1 6 1 Z" fill="#fbbc04" opacity="0"/><path d="M10.3 8.5 A5 5 0 0 1 3 10 L6 6Z" fill="#fbbc04"/><circle cx="6" cy="6" r="2.3" fill="#4285f4" stroke="#fff" stroke-width="0.8"/></svg>
<div class="a" style="left:238px;top:414.5px;width:20px;height:1.5px;background:#8ab4e0"></div>
<svg class="a" style="left:266px;top:400px" width="12" height="12"><circle cx="6" cy="6" r="5" fill="#1f8fd8"/><path d="M2 7 Q3 2 7 2.5 Q10.5 3 10 6.5 L5 6.5 Q5.5 9 9 8.5 Q7 11 4 10 Q2 9 2 7Z" fill="#4ad08a"/></svg>
<svg class="a" style="left:289px;top:401px" width="13" height="11"><path d="M0.5 1 H5 L6 2.5 H12.5 V10.5 H0.5 Z" fill="#f5c242"/><rect x="0.5" y="4" width="12" height="6.5" fill="#fbd86a"/><rect x="3" y="6" width="7" height="2" fill="#4a90d9"/></svg>
<div class="a" style="left:286px;top:414.5px;width:20px;height:1.5px;background:#8ab4e0"></div>
<div class="a" style="left:308px;top:397px;width:24px;height:19px;background:#3a3e52"></div>
<svg class="a" style="left:313px;top:401px" width="13" height="11"><circle cx="7.5" cy="5.5" r="5" fill="#e4572e"/><rect x="1" y="2.5" width="7" height="6" rx="0.5" fill="#c43e1c"/><text x="4.5" y="7.6" font-family="Liberation Sans" font-weight="bold" font-size="5" fill="#fff" text-anchor="middle">P</text></svg>
<div class="a" style="left:310px;top:414.5px;width:20px;height:1.5px;background:#8ab4e0"></div>
<svg class="a" style="left:337px;top:401px" width="13" height="11"><rect x="4" y="0.5" width="8.5" height="10" rx="0.8" fill="#4a8ce0"/><rect x="0.5" y="2.5" width="7" height="6" rx="0.5" fill="#1a5bb8"/><text x="4" y="7.6" font-family="Liberation Sans" font-weight="bold" font-size="5" fill="#fff" text-anchor="middle">W</text></svg>
<svg class="a" style="left:361px;top:401px" width="13" height="11"><rect x="4" y="0.5" width="8.5" height="10" rx="0.8" fill="#33a35a"/><rect x="0.5" y="2.5" width="7" height="6" rx="0.5" fill="#107c41"/><text x="4" y="7.6" font-family="Liberation Sans" font-weight="bold" font-size="5" fill="#fff" text-anchor="middle">X</text></svg>
<svg class="a" style="left:385px;top:400px" width="13" height="12"><rect x="4" y="1" width="8.5" height="6" fill="#3a9be8"/><rect x="4" y="6" width="8.5" height="5.5" fill="#f0b040"/><rect x="0.5" y="3" width="7" height="6" rx="0.5" fill="#0f6cbd"/><circle cx="4" cy="6" r="1.8" fill="none" stroke="#fff" stroke-width="0.8"/></svg>
<div class="a" style="left:382px;top:414.5px;width:20px;height:1.5px;background:#8ab4e0"></div>
<svg class="a" style="left:409px;top:400px" width="13" height="12"><circle cx="9.5" cy="3" r="2" fill="#7b83eb"/><rect x="7" y="5" width="5.5" height="5" rx="2" fill="#7b83eb"/><rect x="1" y="3" width="7.5" height="7" rx="0.5" fill="#5059c9"/><text x="4.7" y="8.3" font-family="Liberation Sans" font-weight="bold" font-size="5" fill="#fff" text-anchor="middle">T</text></svg>
<svg class="a" style="left:433px;top:400px" width="12" height="12"><path d="M6 0.5 L11 3.5 V8.5 L6 11.5 L1 8.5 V3.5 Z" fill="#3aa040"/><path d="M6 3 L9 4.8 V7.2 L6 9 L3 7.2 V4.8 Z" fill="#1a5a2a"/><path d="M5 4.5 L7.5 6 L5 7.5Z" fill="#c8f0a0"/></svg>
<div class="a" style="left:429px;top:414.5px;width:20px;height:1.5px;background:#8ab4e0"></div>
<svg class="a" style="left:531px;top:401px" width="12" height="10"><circle cx="4" cy="3.5" r="2.5" fill="#f5c242"/><path d="M2 9.5 Q0 9.5 0.5 7.5 Q1 5.5 3 6 Q4 3.5 7 4 Q10 4.5 10 7 Q12 7.5 11.5 9 Q11 9.5 10 9.5 Z" fill="#e8eef6"/></svg>
<div class="a" style="left:547px;top:402.5px;font-size:7px;color:#fff">67°F&nbsp; Mostly cloudy</div>
<svg class="a" style="left:616px;top:404px" width="7" height="5"><path d="M0.5 4 L3.5 1 L6.5 4" stroke="#ddd" fill="none" stroke-width="0.9"/></svg>
<svg class="a" style="left:625px;top:403px" width="10" height="6"><path d="M1 5.5 Q0 5.5 0.5 4 Q1 2.5 3 3 Q4 0.5 6.5 1 Q9 1.5 9 4 Q10 4.5 9.5 5.5Z" fill="#3a9be8"/></svg>
<svg class="a" style="left:638px;top:401px" width="6" height="10"><rect x="1.5" y="0.5" width="3" height="7" rx="0.5" fill="#eee"/><path d="M3 7.5 V9.5" stroke="#eee"/></svg>
<svg class="a" style="left:649px;top:403px" width="10" height="7"><rect x="0.5" y="0.5" width="8" height="5.5" fill="none" stroke="#ddd"/><rect x="2" y="2" width="5" height="2.5" fill="#ddd"/><rect x="8.5" y="2" width="1" height="2.5" fill="#ddd"/></svg>
<svg class="a" style="left:662px;top:401px" width="9" height="9"><path d="M1 8.5 H8 V1 Z" fill="#888"/></svg>
<svg class="a" style="left:673px;top:401px" width="9" height="9"><path d="M1 3 H3 L5.5 1 V8 L3 6 H1 Z" fill="none" stroke="#bbb" stroke-width="0.8"/><path d="M7 3 Q8 4.5 7 6" stroke="#bbb" fill="none" stroke-width="0.7"/></svg>
<div class="a" style="left:687px;top:398.5px;font-size:6px;color:#fff">10:38 AM</div>
<div class="a" style="left:687px;top:407px;font-size:6px;color:#fff">5/9/2022</div>
<svg class="a" style="left:718px;top:400px" width="12" height="12"><path d="M1 1.5 H10.5 V8 H4 L1.5 10.5 V8 H1 Z" fill="none" stroke="#eee" stroke-width="0.9"/><path d="M3 3.5 H8.5 M3 5.5 H8.5" stroke="#eee" stroke-width="0.7"/><circle cx="9.5" cy="9.5" r="2.2" fill="#eee"/><text x="9.5" y="11" font-family="Liberation Sans" font-size="3.5" fill="#1f2336" text-anchor="middle">7</text></svg>

<svg class="a" style="left:535.8px;top:361.8px" width="6" height="8"><path d="M0.5 0.5 V6.3 L1.9 5 L2.9 7.2 L3.8 6.8 L2.9 4.7 L4.8 4.7 Z" fill="#fff" stroke="#555" stroke-width="0.7"/></svg>
</div></body></html>
